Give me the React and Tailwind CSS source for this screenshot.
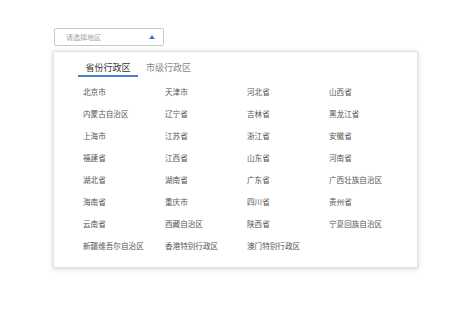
import React from "react";

const rows = [
  ["北京市", "天津市", "河北省", "山西省"],
  ["内蒙古自治区", "辽宁省", "吉林省", "黑龙江省"],
  ["上海市", "江苏省", "浙江省", "安徽省"],
  ["福建省", "江西省", "山东省", "河南省"],
  ["湖北省", "湖南省", "广东省", "广西壮族自治区"],
  ["海南省", "重庆市", "四川省", "贵州省"],
  ["云南省", "西藏自治区", "陕西省", "宁夏回族自治区"],
  ["新疆维吾尔自治区", "香港特别行政区", "澳门特别行政区", ""],
];

export default function App() {
  return (
    <div
      className="w-[474px] h-[311px] bg-white overflow-hidden"
      style={{ fontFamily: '"Noto Sans CJK SC", "Noto Sans", sans-serif' }}
    >
      <div className="pt-[28px] pl-[54px]">
        <div className="w-[110px] h-[18px] border border-[#c9c9c9] rounded-[2px] flex items-center justify-between pl-[11px] pr-[8px]">
          <span className="text-[7px] leading-none text-[#a0a0a0]">请选择地区</span>
          <span className="w-0 h-0 border-l-[3px] border-r-[3px] border-b-[4px] border-l-transparent border-r-transparent border-b-[#3a78d6]" />
        </div>
      </div>
      <div className="ml-[53px] mt-[5px] w-[365px] h-[217px] bg-white border border-[#e2e2e2] shadow-[0_1px_5px_rgba(0,0,0,0.18)] pt-[10px] pl-[24px]">
        <div className="flex">
          <div className="w-[60px] h-[15px] flex items-start justify-center border-b-2 border-[#4b7fd2] text-[9px] leading-[12px] text-[#333]">
            省份行政区
          </div>
          <div className="px-[8px] h-[15px] flex items-start text-[9px] leading-[12px] text-[#888]">
            市级行政区
          </div>
        </div>
        <div className="ml-[5px] mt-[4px] grid grid-cols-[repeat(4,82px)]">
          {rows.flat().map((t, i) => (
            <div key={i} className="h-[22px] flex items-center text-[7.6px] text-[#555]">
              {t}
            </div>
          ))}
        </div>
      </div>
    </div>
  );
}
